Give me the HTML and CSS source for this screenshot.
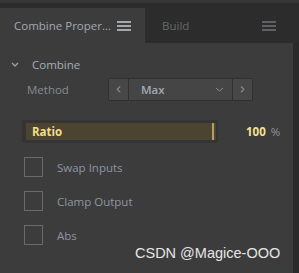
FILE: index.html
```html
<!DOCTYPE html>
<html lang="en">
<head>
  <meta charset="UTF-8">
  <title>Combine Properties</title>
  <link rel="stylesheet" href="styles.css">
</head>
<body>
  <div class="tab-bar">
    <div class="tab tab-active">
      <span class="tab-title">Combine Proper...</span>
      <span class="menu-icon"><i></i><i></i><i></i></span>
    </div>
    <div class="tab tab-idle">
      <span class="tab-title">Build</span>
      <span class="menu-icon"><i></i><i></i><i></i></span>
    </div>
  </div>

  <div class="body-row">
    <div class="panel">
      <div class="section-head">
        <svg class="chevron" width="8" height="5" viewBox="0 0 8 5"><path d="M1 1 L4 4 L7 1" fill="none" stroke="#9aa2ac" stroke-width="1.3"/></svg>
        <span>Combine</span>
      </div>

      <div class="field-row">
        <span class="field-label">Method</span>
        <div class="stepper">
          <button class="step-btn">&lsaquo;</button>
          <div class="select">
            <span>Max</span>
            <svg width="9" height="5" viewBox="0 0 9 5"><path d="M1 1 L4.5 4 L8 1" fill="none" stroke="#8a8f96" stroke-width="1"/></svg>
          </div>
          <button class="step-btn">&rsaquo;</button>
        </div>
      </div>

      <div class="slider-row">
        <div class="slider">
          <div class="slider-fill">
            <span>Ratio</span>
            <span class="handle"></span>
          </div>
        </div>
        <span class="slider-value">100</span>
        <span class="unit">%</span>
      </div>

      <div class="checks">
        <label class="check"><span class="box"></span>Swap Inputs</label>
        <label class="check"><span class="box"></span>Clamp Output</label>
        <label class="check"><span class="box"></span>Abs</label>
      </div>
    </div>
    <div class="scroll-strip"></div>
  </div>

  <div class="watermark">CSDN @Magice-OOO</div>
</body>
</html>
```

FILE: styles.css
```css
* {
  margin: 0;
  padding: 0;
  box-sizing: border-box;
}

body {
  width: 299px;
  height: 273px;
  overflow: hidden;
  background: #2c2c2c;
  font-family: 'Open Sans', 'Noto Sans', sans-serif;
  font-size: 11.5px;
  color: #9aa2ac;
  position: relative;
  display: flex;
  flex-direction: column;
}

.tab-bar {
  height: 43px;
  display: flex;
  align-items: flex-end;
  border-top: 3px solid #363636;
  background: #2c2c2c;
}

.tab {
  height: 35px;
  display: flex;
  align-items: center;
  justify-content: space-between;
}

.tab-active {
  width: 145px;
  background: #3c3c3c;
  padding: 0 14px 0 14px;
}

.tab-idle {
  flex: 1;
  padding: 0 23px 0 17px;
  color: #666a6e;
}

.tab-active .tab-title {
  color: #a2aab4;
  font-size: 11.5px;
}

.menu-icon {
  width: 14px;
  display: flex;
  flex-direction: column;
  gap: 2px;
}

.menu-icon i {
  display: block;
  height: 2px;
  background: #a4a8ad;
}

.tab-idle .menu-icon i {
  background: #5e6063;
}

.body-row {
  flex: 1;
  display: flex;
}

.panel {
  flex: 1;
  background: #3c3c3c;
}

.scroll-strip {
  width: 6px;
  background: #2a2a2a;
}

.section-head {
  margin-top: 11px;
  height: 20px;
  display: flex;
  align-items: center;
  padding-left: 11px;
  gap: 13px;
  color: #a6aeb8;
}

.field-row {
  margin-top: 4px;
  height: 23px;
  display: flex;
  align-items: center;
  padding-left: 27px;
}

.field-label {
  width: 81px;
  color: #858c95;
}

.stepper {
  display: flex;
  height: 23px;
  width: 145px;
  border: 1px solid #303030;
  border-radius: 2px;
  background: #454545;
}

.step-btn {
  width: 19px;
  background: #474747;
  border: none;
  color: #8a8f96;
  font-size: 15px;
  font-family: 'DejaVu Sans', sans-serif;
  line-height: 1;
}

.select {
  flex: 1;
  display: flex;
  align-items: center;
  justify-content: space-between;
  padding: 0 8px 0 12px;
  border-left: 1px solid #303030;
  border-right: 1px solid #303030;
  color: #a2aab4;
  font-weight: 600;
}

.slider-row {
  margin-top: 19px;
  height: 23px;
  display: flex;
  align-items: center;
  padding-left: 22px;
}

.slider {
  width: 196px;
  height: 23px;
  padding: 3px 2px 3px 4px;
  background: #343434;
}

.slider-fill {
  height: 100%;
  background: #4a4431;
  display: flex;
  align-items: center;
  justify-content: space-between;
  padding-left: 6px;
  color: #f3de8a;
  font-weight: 700;
}

.handle {
  width: 2px;
  height: 100%;
  background: #b39f62;
  margin-right: 2px;
}

.slider-value {
  margin-left: 28px;
  color: #f6e18e;
  font-weight: 700;
}

.unit {
  margin-left: 5px;
  color: #8c96a0;
}

.checks {
  margin-top: 14px;
  display: flex;
  flex-direction: column;
  gap: 14px;
  padding-left: 24px;
}

.check {
  height: 20px;
  display: flex;
  align-items: center;
  gap: 14px;
  color: #8e96a0;
}

.box {
  width: 19px;
  height: 20px;
  border: 1px solid #6a6a6a;
}

.watermark {
  position: absolute;
  left: 135px;
  top: 245px;
  font-family: 'Liberation Sans', Arial, sans-serif;
  font-size: 14.5px;
  color: #e6e6e6;
}
```
